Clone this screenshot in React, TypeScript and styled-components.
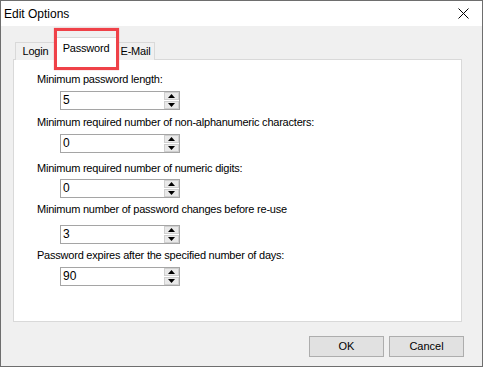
import React from "react";
import styled, { createGlobalStyle } from "styled-components";

const Global = createGlobalStyle`
  html, body { margin: 0; padding: 0; background: #f0f0f0; }
  body { width: 483px; height: 367px; overflow: hidden; }
  * { box-sizing: border-box; }
`;

const Window = styled.div`
  position: relative;
  width: 483px;
  height: 367px;
  border: 1px solid #6e6e6e;
  background: #f0f0f0;
  display: flex;
  flex-direction: column;
  font-family: "Liberation Sans", Arial, sans-serif;
  color: #000;
`;

const TitleBar = styled.div`
  height: 25px;
  background: #ffffff;
  display: flex;
  align-items: center;
  justify-content: space-between;
  padding: 0 13px 0 3px;
`;

const Title = styled.span`
  font-size: 12px;
  line-height: 14px;
  margin-top: 1px;
`;

const CloseIcon = styled.svg`
  width: 11px;
  height: 11px;
  display: block;
`;

const Body = styled.div`
  flex: 1;
  display: flex;
  flex-direction: column;
  padding: 11px 20px 0 12px;
`;

const TabStrip = styled.div`
  position: relative;
  z-index: 2;
  display: flex;
  align-items: flex-end;
  height: 23px;
  margin-bottom: -1px;
  padding-left: 2px;
`;

const Tab = styled.div<{ $w: number; $active?: boolean }>`
  width: ${(p) => p.$w}px;
  height: ${(p) => (p.$active ? 23 : 18)}px;
  margin-left: ${(p) => (p.$active ? -1 : 0)}px;
  margin-right: ${(p) => (p.$active ? -1 : 0)}px;
  border: 1px solid #d9d9d9;
  border-bottom: none;
  background: ${(p) => (p.$active ? "#ffffff" : "#f0f0f0")};
  position: relative;
  z-index: ${(p) => (p.$active ? 2 : 1)};
  font-size: 11px;
  letter-spacing: -0.2px;
  line-height: ${(p) => (p.$active ? 20 : 17)}px;
  text-align: center;
  white-space: nowrap;
`;

const Panel = styled.div`
  width: 449px;
  height: 263px;
  background: #ffffff;
  border: 1px solid #d9d9d9;
  display: flex;
  flex-direction: column;
  padding: 13px 0 0 23px;
`;

const Field = styled.div<{ $top: number; $inner: number }>`
  display: flex;
  flex-direction: column;
  align-items: flex-start;
  margin-top: ${(p) => p.$top}px;
  gap: ${(p) => p.$inner}px;
`;

const Label = styled.div`
  font-size: 11px;
  letter-spacing: -0.22px;
  line-height: 13px;
  white-space: nowrap;
`;

const SpinBox = styled.div`
  margin-left: 23px;
  width: 120px;
  height: 19px;
  border: 1px solid #a5a5a5;
  background: #fff;
  display: flex;
  align-items: stretch;
`;

const Value = styled.div`
  flex: 1;
  font-size: 12px;
  line-height: 17px;
  padding-left: 2px;
`;

const SpinButtons = styled.div`
  width: 15px;
  display: flex;
  flex-direction: column;
  gap: 1px;
`;

const SpinButton = styled.div`
  flex: 1;
  background: #e9e9e9;
  border: 1px solid #cfcfcf;
  display: flex;
  align-items: center;
  justify-content: center;
`;

const Arrow = styled.svg`
  width: 7px;
  height: 4px;
  display: block;
`;

const Footer = styled.div`
  display: flex;
  justify-content: flex-end;
  gap: 5px;
  margin-top: 14px;
  margin-right: -2px;
`;

const Button = styled.div`
  width: 75px;
  height: 21px;
  background: #e1e1e1;
  border: 1px solid #adadad;
  font-size: 11px;
  line-height: 19px;
  text-align: center;
`;

const Highlight = styled.div`
  position: absolute;
  left: 53px;
  top: 27px;
  width: 65px;
  height: 42px;
  border: 3px solid #ef4148;
  z-index: 5;
  box-shadow: 0 0 1px rgba(239, 65, 72, 0.6);
  pointer-events: none;
`;

const fields = [
  { label: "Minimum password length:", value: "5", top: 0, inner: 5 },
  { label: "Minimum required number of non-alphanumeric characters:", value: "0", top: 6, inner: 5 },
  { label: "Minimum required number of numeric digits:", value: "0", top: 9, inner: 4 },
  { label: "Minimum number of password changes before re-use", value: "3", top: 5, inner: 9 },
  { label: "Password expires after the specified number of days:", value: "90", top: 5, inner: 5 },
];

function Spin({ value }: { value: string }) {
  return (
    <SpinBox>
      <Value>{value}</Value>
      <SpinButtons>
        <SpinButton>
          <Arrow viewBox="0 0 7 4">
            <path d="M0 4 L3.5 0 L7 4 Z" fill="#000" />
          </Arrow>
        </SpinButton>
        <SpinButton>
          <Arrow viewBox="0 0 7 4">
            <path d="M0 0 L3.5 4 L7 0 Z" fill="#000" />
          </Arrow>
        </SpinButton>
      </SpinButtons>
    </SpinBox>
  );
}

export default function App() {
  return (
    <>
      <Global />
      <Window>
        <TitleBar>
          <Title>Edit Options</Title>
          <CloseIcon viewBox="0 0 11 11">
            <path d="M0.5 0.5 L10.5 10.5 M10.5 0.5 L0.5 10.5" stroke="#000" strokeWidth="1" />
          </CloseIcon>
        </TitleBar>
        <Body>
          <TabStrip>
            <Tab $w={41}>Login</Tab>
            <Tab $w={62} $active>
              Password
            </Tab>
            <Tab $w={39}>E-Mail</Tab>
          </TabStrip>
          <Panel>
            {fields.map((f) => (
              <Field key={f.label} $top={f.top} $inner={f.inner}>
                <Label>{f.label}</Label>
                <Spin value={f.value} />
              </Field>
            ))}
          </Panel>
          <Footer>
            <Button>OK</Button>
            <Button>Cancel</Button>
          </Footer>
        </Body>
        <Highlight />
      </Window>
    </>
  );
}
